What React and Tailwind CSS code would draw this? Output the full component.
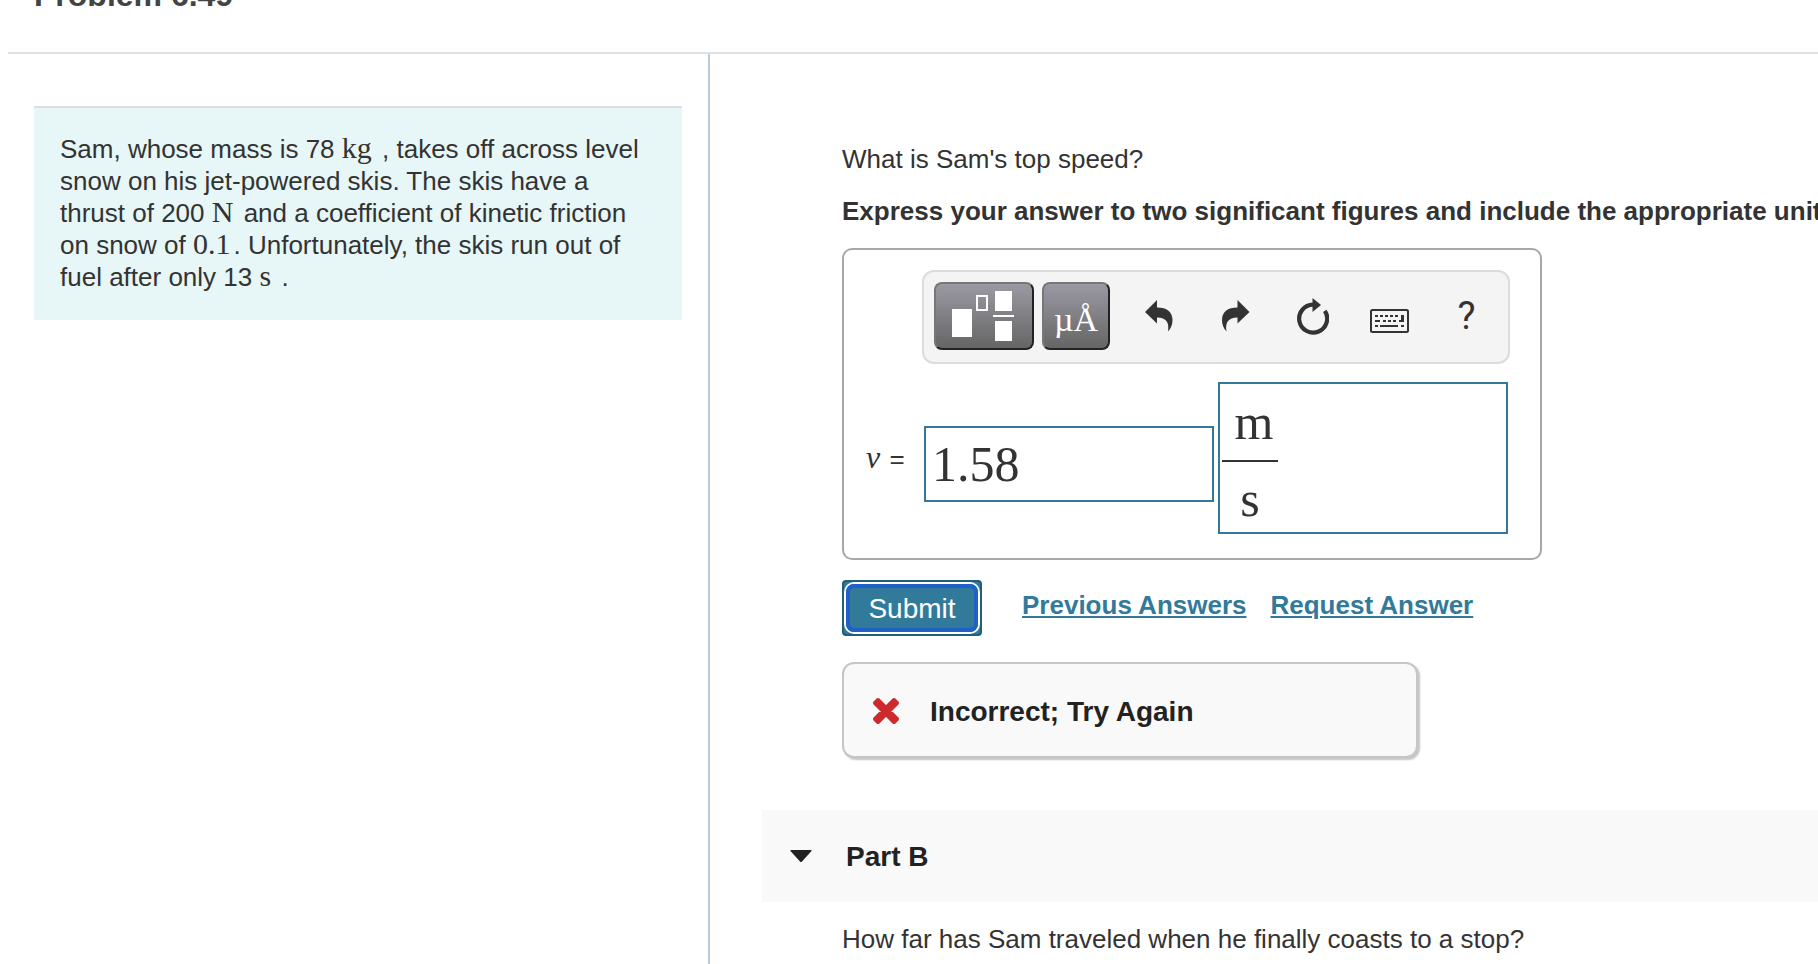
import { useState } from "react";

const Unit = ({ children }) => (
  <span className="mr-[3px] font-['Liberation_Serif',serif] text-[30px] leading-6">{children}</span>
);

const UndoIcon = () => (
  <svg width="28" height="32" viewBox="0 0 28 32" fill="currentColor" aria-hidden="true">
    <path d="M0 12 12 0v7.500C22 7.500 27.500 12 27.500 20c0 4.500-1.500 8.500-4.500 11.500 1.500-8.500-1.500-14-11-14v6z" />
  </svg>
);

const RedoIcon = () => (
  <svg width="28" height="32" viewBox="0 0 28 32" fill="currentColor" aria-hidden="true">
    <path d="M27.500 12 15.500 0v7.500C5.500 7.500 0 12 0 20c0 4.500 1.500 8.500 4.500 11.500C3 23 6 17.500 15.500 17.500v6z" />
  </svg>
);

const ResetIcon = () => (
  <svg width="32" height="37" viewBox="0 0 32 37" aria-hidden="true">
    <path d="M16 6.600A14 14 0 1 0 27.800 12.800" fill="none" stroke="currentColor" strokeWidth="4.200" />
    <path d="M15.500 0 24 7l-8.500 7z" fill="currentColor" />
  </svg>
);

const KeyboardIcon = () => (
  <svg width="39" height="24" viewBox="0 0 39 24" fill="currentColor" aria-hidden="true">
    <rect x="1" y="1" width="37" height="22" rx="1.500" fill="none" stroke="currentColor" strokeWidth="2" />
    <path d="M5 6h3v2H5zM10 6h3v2h-3zM15 6h3v2h-3zM20 6h3v2h-3zM25 6h3v2h-3zM31 6h3v7h-5v-2h2z" />
    <path d="M5 11h5v2H5zM13 11h3v2h-3zM18 11h3v2h-3zM23 11h3v2h-3zM5 16h3v2H5zM10 16h18v2H10zM31 16h3v2h-3z" />
  </svg>
);

const TemplatesIcon = () => (
  <svg width="64" height="52" viewBox="0 0 64 52" fill="#fff" aria-hidden="true">
    <rect x="0" y="19" width="20" height="28" />
    <rect x="25" y="6" width="10" height="14" fill="none" stroke="#fff" strokeWidth="2" />
    <rect x="43" y="1" width="17" height="20" />
    <rect x="41" y="25" width="21" height="2" />
    <rect x="43" y="31" width="17" height="20" />
  </svg>
);

const CrossIcon = () => (
  <svg width="28" height="28" viewBox="0 0 28 28" aria-hidden="true">
    <path
      d="M6 3 14 11 22 3 25 6 17 14 25 22 22 25 14 17 6 25 3 22 11 14 3 6z"
      fill="#cc2a2c"
      stroke="#cc2a2c"
      strokeWidth="4"
      strokeLinejoin="round"
    />
  </svg>
);

const darkButton =
  "flex h-[68px] shrink-0 items-center justify-center rounded-lg border-2 border-t-[#777] border-l-[#777] border-r-[#222] border-b-[#222] bg-linear-to-b from-[#9b9aa4] to-[#666] text-white";
const plainButton = "flex h-[68px] w-[77px] shrink-0 items-center justify-center";

const Toolbar = () => (
  <div className="flex w-[588px] items-center rounded-xl border-2 border-[#dcdcdc] bg-[#f4f4f4] pt-[10px] pb-3 pl-[10px]">
    <button type="button" aria-label="Templates" className={`${darkButton} mr-2 w-[100px]`}>
      <TemplatesIcon />
    </button>
    <button
      type="button"
      aria-label="Units"
      className={`${darkButton} mr-[10px] w-[68px] pt-2 font-['Liberation_Serif',serif] text-[34px] leading-none`}
    >
      µÅ
    </button>
    <button type="button" aria-label="Undo" className={plainButton}>
      <UndoIcon />
    </button>
    <button type="button" aria-label="Redo" className={plainButton}>
      <RedoIcon />
    </button>
    <button type="button" aria-label="Reset" className={plainButton}>
      <ResetIcon />
    </button>
    <button type="button" aria-label="Keyboard shortcuts" className={`${plainButton} pt-[10px]`}>
      <KeyboardIcon />
    </button>
    <button type="button" aria-label="Help" className={`${plainButton} font-[Roboto,sans-serif] text-[38px] leading-none`}>
      ?
    </button>
  </div>
);

const AnswerForm = () => {
  const [value, setValue] = useState("1.58");
  const [top, setTop] = useState("m");
  const [bottom, setBottom] = useState("s");

  return (
    <div className="flex w-[700px] flex-col rounded-[10px] border-2 border-[#a8a8a8] pt-5 pb-6">
      <div className="pl-[78px]">
        <Toolbar />
      </div>
      <div className="mt-[18px] flex items-center gap-1 pl-[22px]">
        <div className="flex items-center pt-3">
          <label htmlFor="answer-value" className="w-[58px] pb-[10px]">
            <i className="mr-[2px] font-['Liberation_Serif',serif] text-[32px] leading-6">v</i> =
          </label>
          <input
            id="answer-value"
            type="text"
            value={value}
            onChange={(e) => setValue(e.target.value)}
            className="h-[76px] w-[290px] border-2 border-[#327a9a] px-[6px] font-['Liberation_Serif',serif] text-[50px]"
          />
        </div>
        <div className="flex h-[152px] w-[290px] flex-col border-2 border-[#327a9a] pt-1 pl-[2px] font-['Liberation_Serif',serif] text-[50px]">
          <input
            type="text"
            aria-label="Unit numerator"
            value={top}
            onChange={(e) => setTop(e.target.value)}
            className="h-[74px] w-14 border-b-2 border-[#333] pb-1 pl-2 text-center"
          />
          <input
            type="text"
            aria-label="Unit denominator"
            value={bottom}
            onChange={(e) => setBottom(e.target.value)}
            className="h-[70px] w-14 pt-1 text-center"
          />
        </div>
      </div>
    </div>
  );
};

export default function App() {
  return (
    <div className="flex min-h-screen flex-col overflow-hidden bg-white font-['Liberation_Sans',Arial,sans-serif] text-[26px] leading-8 text-[#333]">
      <header className="ml-2 border-b-2 border-[#e0e0e0] pb-[41px] pl-[26px]">
        <h1 className="-mt-[21px] text-[32px] leading-8 font-bold text-[#444]">Problem 6.49</h1>
      </header>

      <div className="flex flex-1">
        <aside className="w-[39%] shrink-0 pt-[52px] pr-[27px] pl-[34px]">
          <p className="border-t-2 border-[#dcdfdf] bg-[#e7f6f6] px-[26px] pt-[25px] pb-[27px]">
            Sam, whose mass is 78 <Unit>kg</Unit> , takes off across level snow on his jet-powered skis. The skis have a
            thrust of 200 <Unit>N</Unit> and a coefficient of kinetic friction on snow of <Unit>0.1</Unit>.
            Unfortunately, the skis run out of fuel after only 13 <Unit>s</Unit> .
          </p>
        </aside>

        <main className="-ml-px min-w-0 flex-1 border-l-2 border-[#b9cad8] pt-[89px] pl-[52px]">
          <section className="pl-20">
            <p>What is Sam's top speed?</p>
            <p className="mt-5 mb-[21px] font-bold whitespace-nowrap">
              Express your answer to two significant figures and include the appropriate units.
            </p>
            <AnswerForm />

            <div className="mt-5 flex items-center">
              <button
                type="button"
                className="h-14 w-[140px] rounded-[4px] border-2 border-[#205f78] bg-[#327a9a] p-[2px] text-[28px] text-white"
              >
                <span className="flex h-full items-center justify-center rounded-lg border-4 border-[#1f60c9] pt-[2px] ring-2 ring-white">
                  Submit
                </span>
              </button>
              <a href="#previous" className="mb-[6px] ml-10 font-bold text-[#327a9a] underline">
                Previous Answers
              </a>
              <a href="#request" className="mb-[6px] ml-6 font-bold text-[#327a9a] underline">
                Request Answer
              </a>
            </div>

            <div className="mt-[26px] flex h-24 w-[576px] items-center rounded-xl border-2 border-[#c6c6c6] bg-[#f9f9f9] pt-[2px] pl-7 text-[28px] font-bold text-[#222] shadow-[2px_2px_2px_#c4c4c4]">
              <CrossIcon />
              <span className="ml-[30px] pt-[2px]">Incorrect; Try Again</span>
            </div>
          </section>

          <section className="mt-[52px]">
            <h2 className="bg-[#f9f9f9]">
              <button
                type="button"
                aria-expanded="true"
                className="flex h-[92px] w-full items-center pl-7 text-[28px] font-bold text-[#222]"
              >
                <svg width="22" height="12" viewBox="0 0 22 12" fill="currentColor" aria-hidden="true">
                  <path d="M1 0h20q1 0 .500 1l-9.500 10.500q-1 1-2 0L.500 1Q0 0 1 0z" />
                </svg>
                <span className="ml-[34px] pt-[2px]">Part B</span>
              </button>
            </h2>
            <p className="mt-[21px] pl-20">How far has Sam traveled when he finally coasts to a stop?</p>
          </section>
        </main>
      </div>
    </div>
  );
}
